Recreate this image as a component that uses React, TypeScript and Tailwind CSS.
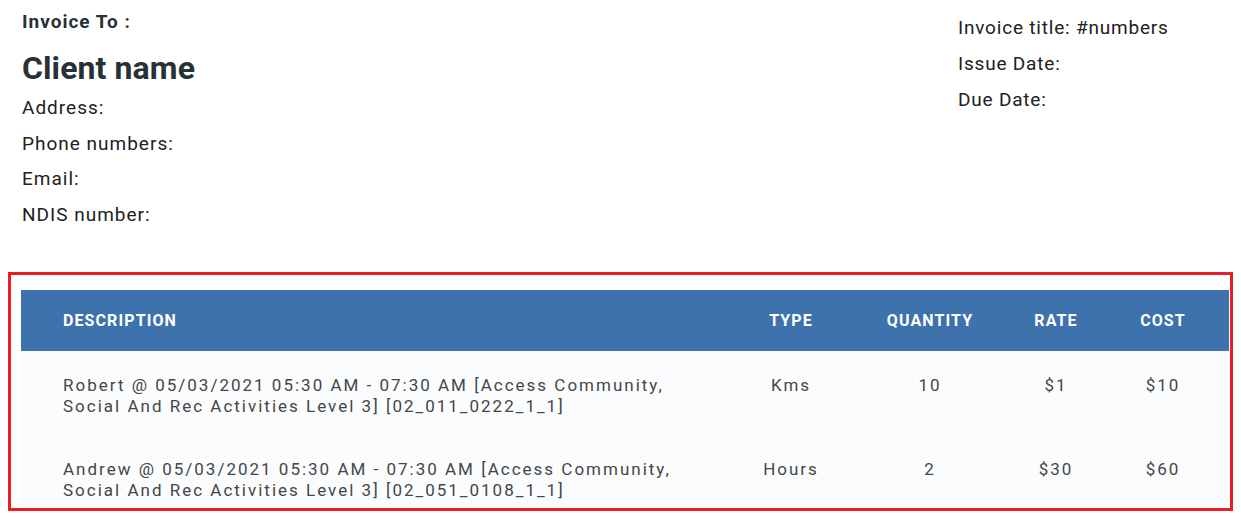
import React from 'react';

const rows = [
  {
    description: 'Robert @ 05/03/2021 05:30 AM - 07:30 AM [Access Community, Social And Rec Activities Level 3] [02_011_0222_1_1]',
    type: 'Kms',
    quantity: '10',
    rate: '$1',
    cost: '$10',
  },
  {
    description: 'Andrew @ 05/03/2021 05:30 AM - 07:30 AM [Access Community, Social And Rec Activities Level 3] [02_051_0108_1_1]',
    type: 'Hours',
    quantity: '2',
    rate: '$30',
    cost: '$60',
  },
];

export default function App() {
  return (
    <div className="w-[1241px] h-[517px] overflow-hidden bg-white font-['Roboto',sans-serif]">
      <div className="h-[272px] flex justify-between pl-[22px] pt-[10px]">
        <div>
          <p className="text-[19px] leading-[24px] font-bold tracking-[1px] text-[#263238]">Invoice To :</p>
          <h1 className="mt-[14px] text-[32px] leading-[40px] font-bold tracking-[0.1px] text-[#263238]">Client name</h1>
          <div className="mt-[2px] text-[19px] leading-[35.5px] tracking-[1px] text-[#212121]">
            <p>Address:</p>
            <p>Phone numbers:</p>
            <p>Email:</p>
            <p>NDIS number:</p>
          </div>
        </div>
        <div className="w-[283px] text-[19px] leading-[36px] tracking-[0.8px] text-[#212121]">
          <p>Invoice title: #numbers</p>
          <p>Issue Date:</p>
          <p>Due Date:</p>
        </div>
      </div>

      <div className="mx-[8px] h-[239px] overflow-hidden border-[3px] border-[#ed1c24] pl-[10px] pr-[6px] pt-[15px]">
        <table className="w-full table-fixed border-collapse">
          <colgroup>
            <col className="w-[716px]" />
            <col className="w-[108px]" />
            <col className="w-[170px]" />
            <col className="w-[82px]" />
            <col className="w-[132px]" />
          </colgroup>
          <thead>
            <tr className="bg-[#3d72ad] text-white text-[16px] font-bold tracking-[1.1px] h-[61px]">
              <th className="pl-[42px] text-left">DESCRIPTION</th>
              <th className="text-center">TYPE</th>
              <th className="text-center">QUANTITY</th>
              <th className="text-center">RATE</th>
              <th className="text-center">COST</th>
            </tr>
          </thead>
          <tbody className="bg-[#fbfcfe] text-[17px] leading-[21px] tracking-[2px] text-[#464646]">
            {rows.map((row, i) => (
              <tr key={i} className="align-top">
                <td className="pl-[42px] pr-[36px] pt-[24px] pb-[18px]">{row.description}</td>
                <td className="pt-[24px] text-center">{row.type}</td>
                <td className="pt-[24px] text-center">{row.quantity}</td>
                <td className="pt-[24px] text-center">{row.rate}</td>
                <td className="pt-[24px] text-center">{row.cost}</td>
              </tr>
            ))}
          </tbody>
        </table>
      </div>
    </div>
  );
}
